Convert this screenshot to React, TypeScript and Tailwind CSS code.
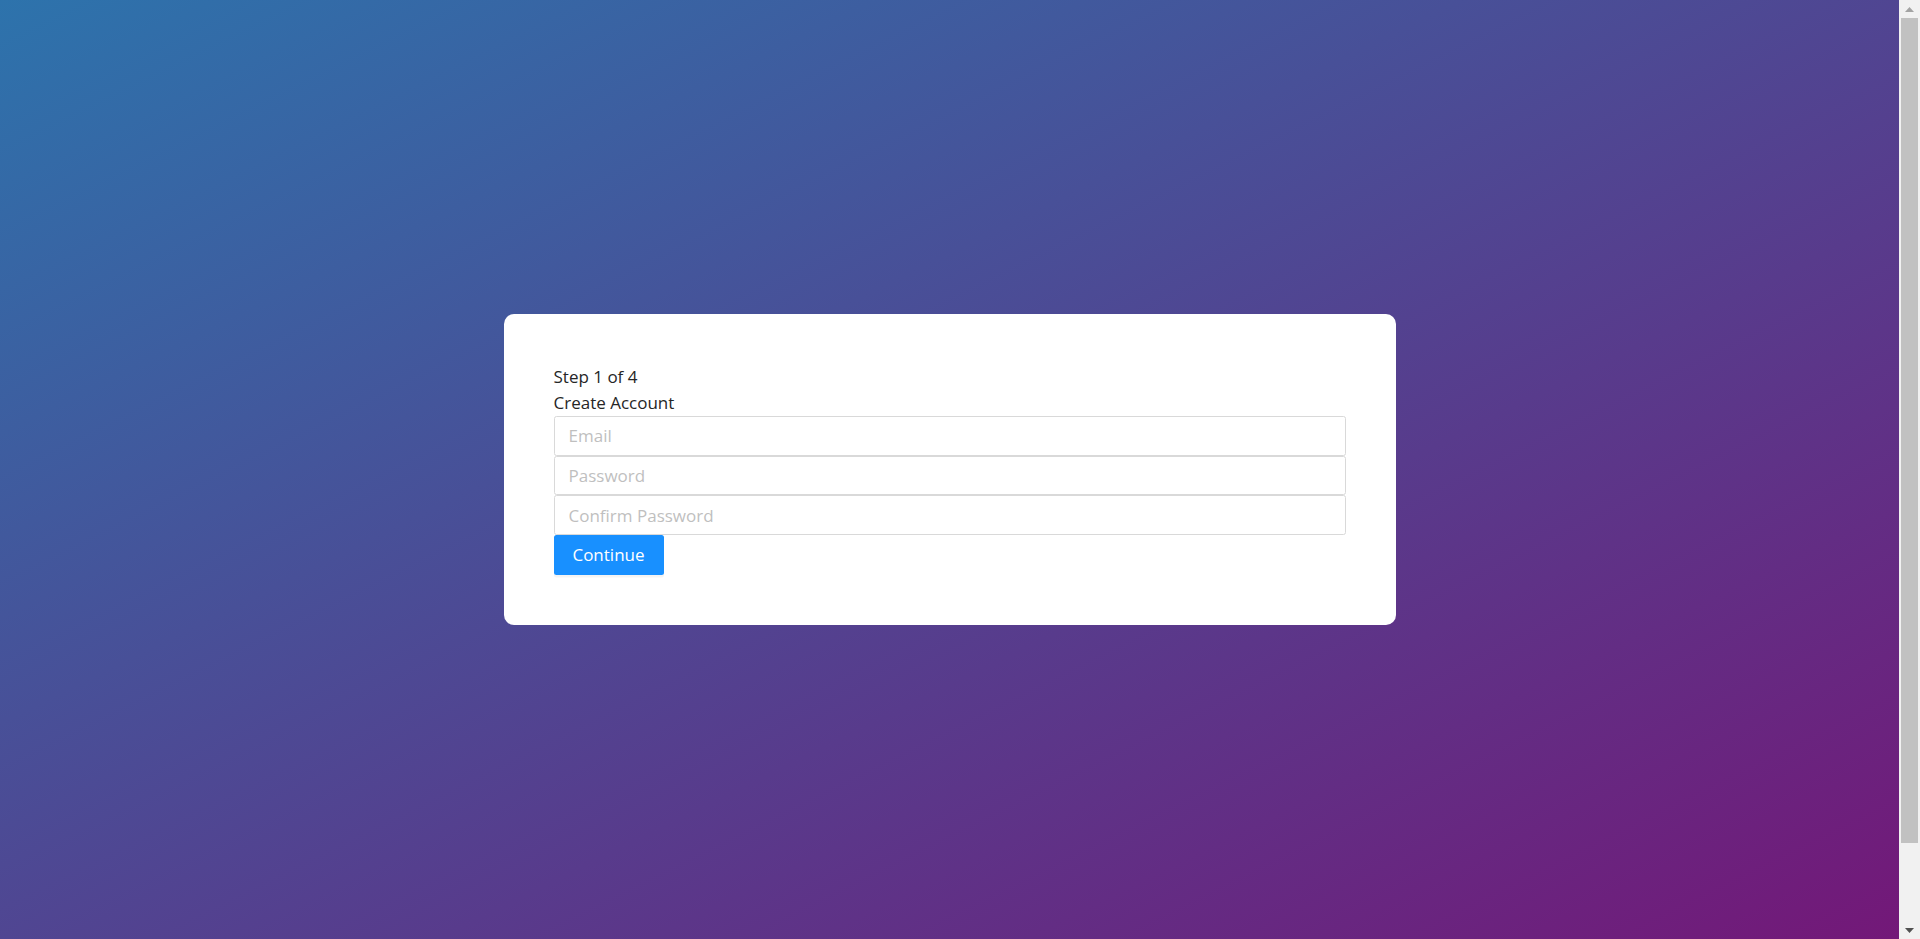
function Scrollbar() {
  return (
    <div className="flex w-[21px] shrink-0 flex-col bg-[#f1f1f1]">
      <div className="flex h-[18px] items-center justify-center">
        <svg width="9" height="5" viewBox="0 0 9 5">
          <path d="M4.5 0L9 5H0z" fill="#a3a3a3" />
        </svg>
      </div>
      <div className="mx-[2px] h-[825px] bg-[#c1c1c1]" />
      <div className="flex-1" />
      <div className="flex h-[18px] items-center justify-center">
        <svg width="9" height="5" viewBox="0 0 9 5">
          <path d="M0 0h9L4.5 5z" fill="#505050" />
        </svg>
      </div>
    </div>
  );
}

export default function App() {
  return (
    <div className="flex h-screen font-['Open_Sans',sans-serif] text-[#262626]">
      <main className="flex flex-1 items-center justify-center bg-[linear-gradient(to_bottom_right,#2d73ac,#731878)]">
        <div className="w-[892px] rounded-[10px] bg-white p-[50px]">
          <div className="text-[17px] leading-[26px]">Step 1 of 4</div>
          <div className="text-[17px] leading-[26px]">Create Account</div>
          <form className="flex flex-col" onSubmit={(e) => e.preventDefault()}>
            <input
              type="email"
              placeholder="Email"
              className="h-[39.7px] w-full rounded-[2.5px] border border-[#d9d9d9] px-[14px] text-[17px] outline-none placeholder:text-[#bfbfbf]"
            />
            <input
              type="password"
              placeholder="Password"
              className="h-[39.7px] w-full rounded-[2.5px] border border-[#d9d9d9] px-[14px] text-[17px] outline-none placeholder:text-[#bfbfbf]"
            />
            <input
              type="password"
              placeholder="Confirm Password"
              className="h-[39.7px] w-full rounded-[2.5px] border border-[#d9d9d9] px-[14px] text-[17px] outline-none placeholder:text-[#bfbfbf]"
            />
            <div>
              <button
                type="submit"
                className="h-10 w-[110px] rounded-[2.5px] bg-[#1890ff] text-[17px] text-white shadow-[0_2.5px_0_rgba(0,0,0,0.045)]"
              >
                Continue
              </button>
            </div>
          </form>
        </div>
      </main>
      <Scrollbar />
    </div>
  );
}
